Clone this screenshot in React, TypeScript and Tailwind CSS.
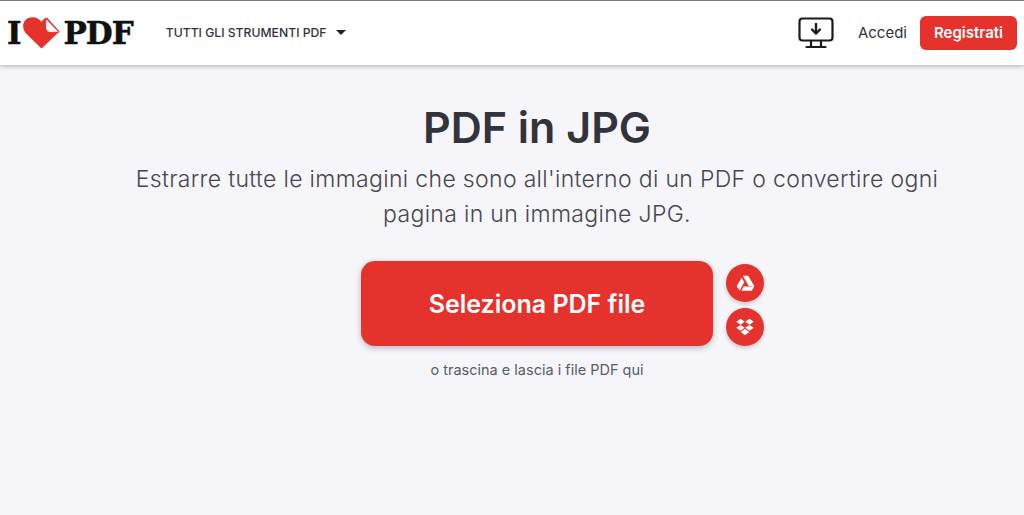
const sans = "font-['Inter','Noto_Sans',sans-serif]";

function Heart() {
  return (
    <svg viewBox="0 0 37 32" className="h-[32px] w-[37px]">
      <path d="M18.5 31.5 L3 16.5 C-2 11 0 3 5.5 1 C10.5 -1 16 1 18.5 5 C20 2.5 22 1 24 .5 L36.5 14.5 Z" fill="#e5322d" />
      <path d="M23 1.5 L36 15 L28 15.5 C25 15.5 23 14 22.5 11 Z" fill="#fff" stroke="#e5322d" strokeWidth="1" />
    </svg>
  );
}

function DesktopIcon() {
  return (
    <svg viewBox="0 0 36 32" className="h-[32px] w-[36px]" fill="none" stroke="#1a1a1a" strokeWidth="2.2">
      <rect x="1.5" y="1.5" width="33" height="22" rx="3" />
      <path d="M13 24v5M23 24v5" />
      <path d="M8.5 30h19" strokeLinecap="round" />
      <path d="M18 7v9.5M14 12.5l4 4 4-4" strokeLinecap="round" strokeLinejoin="round" strokeWidth="2.4" />
    </svg>
  );
}

function DriveIcon() {
  return (
    <svg viewBox="0 0 24 22" className="h-[17px] w-[19px]" fill="#fff">
      <path d="M8.5 1h7l8 13.5h-7z" />
      <path d="M7 3.5l3.4 6L4.5 20 .5 14.5z" />
      <path d="M6.5 20.5l3.3-5.5h13.7l-3.5 5.5z" />
    </svg>
  );
}

function DropboxIcon() {
  return (
    <svg viewBox="0 0 24 24" className="h-[18px] w-[18px]" fill="#fff">
      <path d="M6 1L11.6 5 6 9 .4 5z" />
      <path d="M18 1L23.6 5 18 9 12.4 5z" />
      <path d="M.4 13L6 9.4 11.6 13 6 17z" />
      <path d="M23.6 13L18 9.4 12.4 13 18 17z" />
      <path d="M6.2 18.6L12 14.6 17.8 18.6 12 23z" />
    </svg>
  );
}

export default function App() {
  return (
    <div className={`min-h-[515px] bg-[#f5f5fa] ${sans}`}>
      <header className="flex h-[65px] items-center justify-between border-t border-[#7f7f7f] bg-white pr-[7px] shadow-[0_1px_5px_rgba(0,0,0,0.3)]">
        <div className="flex items-center">
          <div className="ml-[7px] flex h-[34px] items-center font-['DejaVu_Serif',serif] text-[31px] font-bold leading-none tracking-[-1px] text-[#111] [-webkit-text-stroke:0.5px_#111]">
            <span>I</span>
            <span className="ml-[2px] mr-[4px]"><Heart /></span>
            <span>PDF</span>
          </div>
          <div className="ml-[33px] flex items-center text-[12.2px] font-medium text-[#33333b]">
            <span>TUTTI GLI STRUMENTI PDF</span>
            <span className="ml-[9px] h-0 w-0 border-x-[5px] border-t-[5px] border-x-transparent border-t-[#222]" />
          </div>
        </div>
        <div className="flex items-center">
          <span className="mr-[1px]"><DesktopIcon /></span>
          <span className="ml-[23px] text-[15px] text-[#33333b]">Accedi</span>
          <button className="ml-[13px] flex h-[34px] w-[97px] items-center justify-center rounded-[6px] bg-[#e5322d] text-[15px] font-semibold text-white">
            Registrati
          </button>
        </div>
      </header>

      <main className="flex flex-col items-center pl-[50px]">
        <h1 className="mt-[35px] text-[43px] font-semibold leading-[54px] text-[#33333b]">PDF in JPG</h1>
        <p className="mt-[8px] w-[820px] text-center text-[23px] font-light leading-[35px] tracking-[0.33px] text-[#47474f]">
          Estrarre tutte le immagini che sono all'interno di un PDF o convertire ogni pagina in un immagine JPG.
        </p>
        <div className="relative mt-[29px]">
          <button className="flex h-[85px] w-[352px] items-center justify-center rounded-[14px] bg-[#e5322d] pt-[2px] text-[25px] font-semibold text-white shadow-[0_2px_6px_rgba(0,0,0,0.25)]">
            Seleziona PDF file
          </button>
          <div className="absolute left-[365px] top-[3px] flex flex-col gap-[5.5px]">
            <button className="flex h-[38px] w-[38px] items-center justify-center rounded-full bg-[#e5322d] shadow-[0_2px_4px_rgba(0,0,0,0.2)]">
              <DriveIcon />
            </button>
            <button className="flex h-[38px] w-[38px] items-center justify-center rounded-full bg-[#e5322d] shadow-[0_2px_4px_rgba(0,0,0,0.2)]">
              <DropboxIcon />
            </button>
          </div>
        </div>
        <p className="mt-[14px] text-[14.5px] font-normal leading-[20px] text-[#5c5c66]">o trascina e lascia i file PDF qui</p>
      </main>
    </div>
  );
}
